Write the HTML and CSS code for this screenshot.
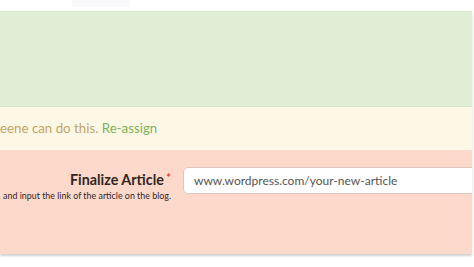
FILE: index.html
```html
<!DOCTYPE html>
<html>
<head>
<meta charset="utf-8">
<link rel="stylesheet" href="styles.css">
</head>
<body>
<div class="top"><div class="tab"></div></div>
<div class="card">
  <div class="green"></div>
  <div class="notice"><span class="who">eene can do this.</span> <a class="reassign">Re-assign</a></div>
  <div class="task">
    <div class="label">
      <div class="title">Finalize Article <span class="req">*</span></div>
      <div class="hint">and input the link of the article on the blog.</div>
    </div>
    <div class="field"><input class="input" type="text" value="www.wordpress.com/your-new-article"></div>
  </div>
</div>
</body>
</html>
```
FILE: styles.css
```css
html, body { margin: 0; padding: 0; background: #ffffff; }
body { width: 474px; height: 267px; overflow: hidden; font-family: Lato, "Open Sans", sans-serif; }
.top { height: 11px; position: relative; }
.tab { position: absolute; left: 72px; top: 0; width: 58px; height: 7px; background: #f9f9fc; }
.card { width: 472px; box-shadow: 0 2px 2px rgba(0,0,0,0.18); }
.green { height: 96px; background: #e0eed5; border-top: 1px solid #d6e6ca; box-sizing: border-box; border-bottom: 1px solid #d6e4cc; }
.notice { height: 43px; background: #fdf8e6; box-sizing: border-box; padding-top: 13px; font-size: 13.3px; white-space: nowrap; }
.who { color: #c3a466; }
.reassign { color: #7cb35c; }
.task { height: 104px; background: #fdd9cb; display: flex; align-items: flex-start; padding-top: 19px; box-sizing: border-box; }
.label { width: 171px; flex: none; text-align: right; }
.title { font-size: 14.3px; font-weight: 700; color: #33261f; line-height: 17px; }
.req { color: #e0403a; font-size: 11px; vertical-align: 3px; margin-left: -1px; }
.hint { font-size: 8.9px; color: #33261f; line-height: 12px; margin-top: 2px; white-space: nowrap; }
.field { flex: 1; min-width: 0; overflow: hidden; padding-left: 12px; margin-top: -2px; }
.input { display: block; width: 320px; height: 27px; box-sizing: border-box; border: 1px solid #e0c8c0; border-radius: 5px; background: #fff; font-family: Lato, sans-serif; font-size: 12px; color: #555; padding: 0 10px; outline: none; }
```
